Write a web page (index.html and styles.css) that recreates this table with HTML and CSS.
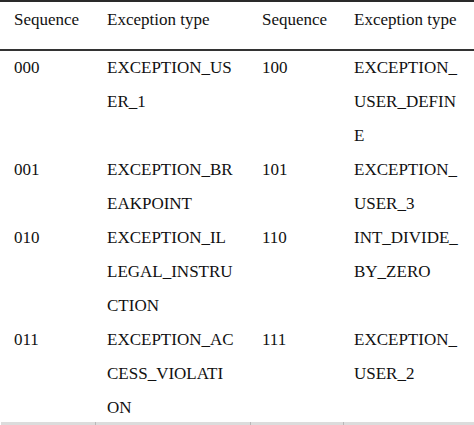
FILE: index.html
```html
<!DOCTYPE html>
<html>
<head>
<meta charset="utf-8">
<link rel="stylesheet" href="styles.css">
</head>
<body>
<div class="page">
  <table class="codes">
    <colgroup>
      <col class="c1"><col class="c2"><col class="c3"><col class="c4">
    </colgroup>
    <thead>
      <tr>
        <th class="p1">Sequence</th>
        <th class="p2">Exception type</th>
        <th class="p3">Sequence</th>
        <th class="p4">Exception type</th>
      </tr>
    </thead>
    <tbody>
      <tr>
        <td class="p1">000</td>
        <td class="p2">EXCEPTION_USER_1</td>
        <td class="p3">100</td>
        <td class="p4">EXCEPTION_USER_DEFINE</td>
      </tr>
      <tr>
        <td class="p1">001</td>
        <td class="p2">EXCEPTION_BREAKPOINT</td>
        <td class="p3">101</td>
        <td class="p4">EXCEPTION_USER_3</td>
      </tr>
      <tr>
        <td class="p1">010</td>
        <td class="p2">EXCEPTION_ILLEGAL_INSTRUCTION</td>
        <td class="p3">110</td>
        <td class="p4">INT_DIVIDE_BY_ZERO</td>
      </tr>
      <tr>
        <td class="p1">011</td>
        <td class="p2">EXCEPTION_ACCESS_VIOLATION</td>
        <td class="p3">111</td>
        <td class="p4">EXCEPTION_USER_2</td>
      </tr>
    </tbody>
  </table>
  <div class="bar">
    <span class="seg s1"></span><span class="seg s2"></span><span class="seg s3"></span><span class="seg s4"></span>
  </div>
</div>
</body>
</html>
```
FILE: styles.css
```css
html, body {
  margin: 0;
  padding: 0;
  background: #ffffff;
}
.page {
  width: 474px;
  height: 425px;
  overflow: hidden;
  font-family: "Liberation Serif", "Times New Roman", serif;
  font-size: 17px;
  color: #111111;
  border-top: 2px solid #2a2a2a;
  box-sizing: border-box;
}
.codes {
  width: 474px;
  table-layout: fixed;
  border-collapse: collapse;
  font-family: "Liberation Serif", "Times New Roman", serif;
  font-size: 17px;
}
.c1 { width: 95px; }
.c2 { width: 154px; }
.c3 { width: 93px; }
.c4 { width: 132px; }
.codes th, .codes td {
  font-family: "Liberation Serif", "Times New Roman", serif;
  font-size: 17px;
  font-weight: normal;
  color: #111111;
  text-align: left;
  vertical-align: top;
  line-height: 34px;
  padding: 0 12px;
  word-break: break-all;
}
.codes th {
  padding-top: 1px;
  padding-bottom: 12px;
  border-bottom: 2px solid #333333;
}
.codes .p1 { padding-left: 14px; }
.codes .p2 { padding-right: 14px; }
.codes .p3 { padding-left: 13px; }
.bar {
  display: flex;
  height: 3px;
  margin-top: -3px;
  margin-left: 1px;
  position: relative;
  background: #dcdcdc;
}
.seg { height: 3px; }
.s1 { width: 94px; }
.s2 { width: 154px; border-left: 1px solid #b8b8b8; }
.s3 { width: 92px; border-left: 1px solid #b8b8b8; }
.s4 { flex: 1; border-left: 1px solid #b8b8b8; }
```
